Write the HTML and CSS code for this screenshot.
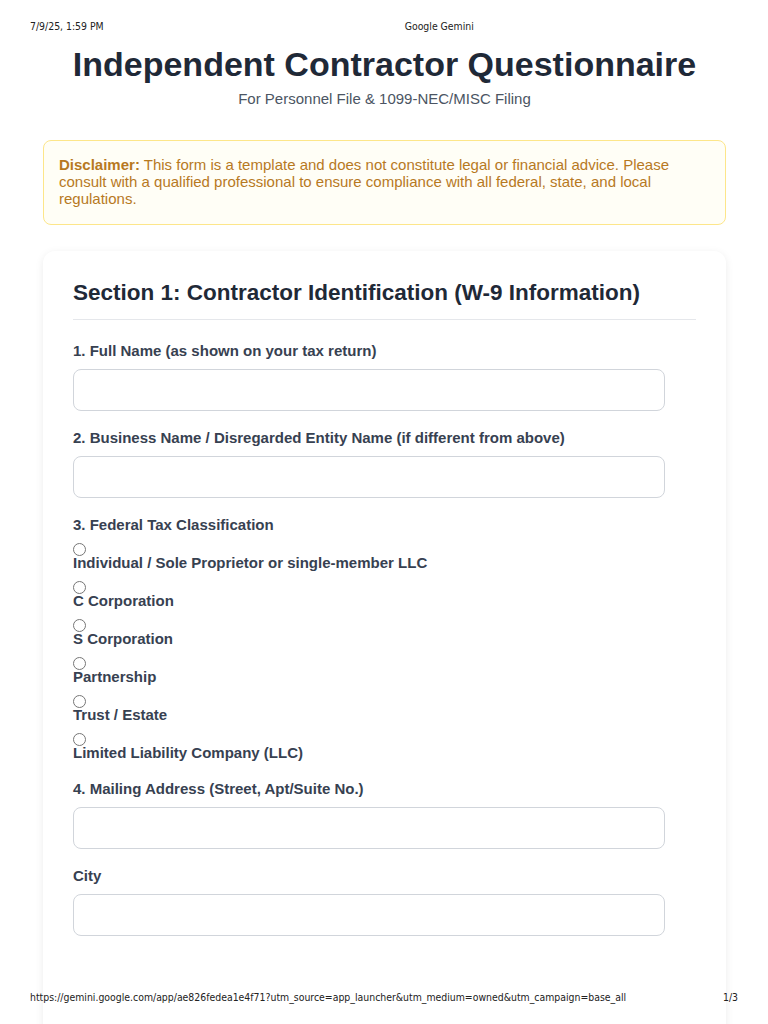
FILE: index.html
```html
<!DOCTYPE html>
<html lang="en">

<head>
    <meta charset="UTF-8">
    <meta name="viewport" content="width=device-width, initial-scale=1.0">
    <title>Independent Contractor Questionnaire</title>
    <link rel="stylesheet" href="styles.css">
</head>

<body>
    <div class="print-head">
        <span>7/9/25, 1:59 PM</span>
        <span class="print-title">Google Gemini</span>
    </div>

    <div class="page">
        <h1>Independent Contractor Questionnaire</h1>
        <p class="subtitle">For Personnel File &amp; 1099-NEC/MISC Filing</p>

        <div class="disclaimer">
            <p><strong>Disclaimer:</strong> This form is a template and does not constitute legal or financial advice. Please
            consult with a qualified professional to ensure compliance with all federal, state, and local
            regulations.</p>
        </div>

        <div class="card">
            <h2>Section 1: Contractor Identification (W-9 Information)</h2>

            <div class="form-group">
                <label for="fullName">1. Full Name (as shown on your tax return)</label>
                <input type="text" id="fullName" name="fullName">
            </div>

            <div class="form-group">
                <label for="businessName">2. Business Name / Disregarded Entity Name (if different from above)</label>
                <input type="text" id="businessName" name="businessName">
            </div>

            <div class="form-group">
                <label>3. Federal Tax Classification</label>
                <div class="options">
                    <div class="option">
                        <input type="radio" id="tc1" name="taxClass">
                        <label for="tc1">Individual / Sole Proprietor or single-member LLC</label>
                    </div>
                    <div class="option">
                        <input type="radio" id="tc2" name="taxClass">
                        <label for="tc2">C Corporation</label>
                    </div>
                    <div class="option">
                        <input type="radio" id="tc3" name="taxClass">
                        <label for="tc3">S Corporation</label>
                    </div>
                    <div class="option">
                        <input type="radio" id="tc4" name="taxClass">
                        <label for="tc4">Partnership</label>
                    </div>
                    <div class="option">
                        <input type="radio" id="tc5" name="taxClass">
                        <label for="tc5">Trust / Estate</label>
                    </div>
                    <div class="option">
                        <input type="radio" id="tc6" name="taxClass">
                        <label for="tc6">Limited Liability Company (LLC)</label>
                    </div>
                </div>
            </div>

            <div class="form-group">
                <label for="address">4. Mailing Address (Street, Apt/Suite No.)</label>
                <input type="text" id="address" name="address">
            </div>

            <div class="form-group">
                <label for="city">City</label>
                <input type="text" id="city" name="city">
            </div>
        </div>
    </div>

    <div class="print-foot">
        <span>https://gemini.google.com/app/ae826fedea1e4f71?utm_source=app_launcher&amp;utm_medium=owned&amp;utm_campaign=base_all</span>
        <span>1/3</span>
    </div>
</body>

</html>
```

FILE: styles.css
```css
html,
body {
    margin: 0;
    height: 1024px;
    overflow: hidden;
}

body {
    font-family: 'Liberation Sans', Arial, sans-serif;
    background-color: #fff;
    color: #1f2937;
    position: relative;
}

.print-head,
.print-foot {
    font-family: 'Liberation Sans Narrow', 'DejaVu Sans Condensed', 'Liberation Sans', sans-serif;
    font-size: 10.4px;
    line-height: 12px;
    color: #222;
    display: flex;
    padding: 0 30px;
}

.print-head {
    padding-top: 20px;
}

.print-title {
    margin-left: 301px;
}

.print-foot {
    position: absolute;
    left: 0;
    right: 0;
    top: 991px;
    justify-content: space-between;
}

.page {
    padding: 0 42px 0 43px;
}

h1 {
    margin: 10px 0 0;
    font-size: 34px;
    line-height: 44px;
    text-align: center;
    color: #1f2937;
}

.subtitle {
    margin: 3px 0 0;
    font-size: 15px;
    line-height: 20px;
    text-align: center;
    color: #4b5563;
}

.disclaimer {
    margin-top: 31px;
    padding: 15px 15px 17px;
    background-color: #fffef6;
    border: 1px solid #fde68a;
    border-radius: 8px;
    color: #b7791f;
    font-size: 15px;
    line-height: 17px;
}

.disclaimer p {
    margin: 0;
}

.card {
    margin-top: 26px;
    padding: 28px 30px 200px;
    background: #fff;
    border-radius: 12px;
    box-shadow: 0 2px 8px rgba(0, 0, 0, 0.08);
}

h2 {
    margin: 0 0 22px;
    padding-bottom: 12px;
    border-bottom: 1px solid #e5e7eb;
    font-size: 22.5px;
    line-height: 28px;
    color: #1f2937;
}

.form-group {
    margin-bottom: 18px;
}

.form-group > label {
    display: block;
    margin-bottom: 9px;
    font-size: 15px;
    line-height: 18px;
    font-weight: bold;
    color: #374151;
}

input[type="text"] {
    display: block;
    width: 95%;
    height: 42px;
    margin: 0;
    padding: 8px 12px;
    border: 1px solid #d1d5db;
    border-radius: 8px;
    box-sizing: border-box;
    font-family: inherit;
    font-size: 15px;
}

.options {
    padding-bottom: 2px;
}

.option {
    margin-bottom: 11px;
}

.option:last-child {
    margin-bottom: 0;
}

.option input[type="radio"] {
    display: block;
    width: 13px;
    height: 13px;
    margin: 0;
}

.option label {
    display: block;
    font-size: 15px;
    line-height: 14px;
    font-weight: bold;
    color: #374151;
}
```
